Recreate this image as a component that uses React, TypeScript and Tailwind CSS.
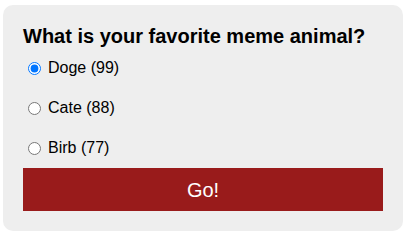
import { useState } from "react";

const options = [
  { id: "doge", label: "Doge", votes: 99 },
  { id: "cate", label: "Cate", votes: 88 },
  { id: "birb", label: "Birb", votes: 77 },
];

export default function App() {
  const [choice, setChoice] = useState("doge");

  return (
    <div className="min-h-[236px] bg-white pl-[3px] pt-[5px] font-['Liberation_Sans',Arial,sans-serif] text-black">
      <form
        className="flex w-[400px] flex-col rounded-[10px] bg-[#eeeeee] p-5"
        onSubmit={(e) => e.preventDefault()}
      >
        <h2 className="text-[20px] leading-[23px] font-bold">What is your favorite meme animal?</h2>
        {options.map((o) => (
          <label key={o.id} className="flex h-10 items-center text-[16px]">
            <input
              type="radio"
              name="animal"
              value={o.id}
              checked={choice === o.id}
              onChange={() => setChoice(o.id)}
              className="m-0 ml-[5px] mr-[7px] h-[13px] w-[13px] accent-[#0075ff]"
            />
            {o.label} ({o.votes})
          </label>
        ))}
        <button
          type="submit"
          className="h-[43px] w-full bg-[#991b1b] text-[20px] text-white"
        >
          Go!
        </button>
      </form>
    </div>
  );
}
